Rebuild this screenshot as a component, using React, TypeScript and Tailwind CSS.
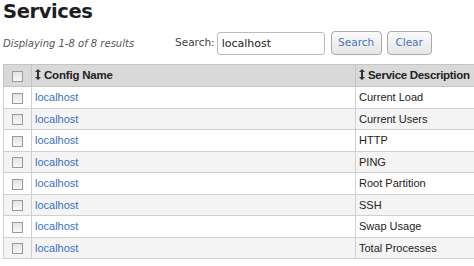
const rows = [
  "Current Load",
  "Current Users",
  "HTTP",
  "PING",
  "Root Partition",
  "SSH",
  "Swap Usage",
  "Total Processes",
]

function SortIcon() {
  return (
    <svg width="6" height="11" viewBox="0 0 6 11" className="mr-[3px] inline-block align-[-1px]">
      <path d="M3 0 L6 3 L4 3 L4 8 L6 8 L3 11 L0 8 L2 8 L2 3 L0 3 Z" fill="#333" />
    </svg>
  )
}

function Box() {
  return (
    <span className="inline-block h-[11px] w-[11px] border border-[#9a9a9a] bg-gradient-to-b from-[#e4e4e4] to-[#f8f8f8] align-middle" />
  )
}

export default function App() {
  return (
    <div className="h-[266px] w-[474px] overflow-hidden bg-white">
      <h1 className="pl-[3px] text-[19.5px] font-bold leading-[24px] tracking-[-0.4px] text-[#1e1e1e] [font-family:'DejaVu_Sans',sans-serif]">
        Services
      </h1>
      <div className="mt-[7px] flex items-center">
        <p className="ml-[3px] w-[172px] text-[10px] italic text-[#555] [font-family:'DejaVu_Sans',sans-serif]">
          Displaying 1-8 of 8 results
        </p>
        <span className="text-[10.5px] text-[#444] [font-family:'DejaVu_Sans',sans-serif]">Search:</span>
        <input
          readOnly
          value="localhost"
          className="ml-[2px] h-[23px] w-[108px] rounded-[3px] border border-[#bbb] px-[4px] text-[11px] text-[#222] [font-family:'DejaVu_Sans',sans-serif]"
        />
        <button className="ml-[6px] h-[24px] w-[51px] rounded-[4px] border border-[#aaa] bg-gradient-to-b from-[#fafafa] to-[#e6e6e6] text-[10.5px] text-[#4a72b8] [font-family:'DejaVu_Sans',sans-serif]">
          Search
        </button>
        <button className="ml-[5px] h-[24px] w-[45px] rounded-[4px] border border-[#aaa] bg-gradient-to-b from-[#fafafa] to-[#e6e6e6] text-[10.5px] text-[#4a72b8] [font-family:'DejaVu_Sans',sans-serif]">
          Clear
        </button>
      </div>
      <table className="ml-[3px] mt-[9px] w-[540px] border-collapse text-[11px] text-[#222] [font-family:'Liberation_Sans',Arial,sans-serif]">
        <thead>
          <tr className="h-[22px] bg-[#d9d9d9]">
            <th className="w-[28px] border border-[#c4c4c4] text-center">
              <Box />
            </th>
            <th className="w-[324px] border border-[#c4c4c4] pl-[3px] text-left text-[11.5px] font-bold tracking-[-0.2px]">
              <SortIcon />
              Config Name
            </th>
            <th className="border border-[#c4c4c4] pl-[3px] text-left text-[11.5px] font-bold tracking-[-0.3px]">
              <SortIcon />
              Service Description
            </th>
          </tr>
        </thead>
        <tbody>
          {rows.map((r, i) => (
            <tr key={r} className={i % 2 === 0 ? "h-[21.5px] bg-white" : "h-[21.5px] bg-[#f4f4f4]"}>
              <td className="border border-[#d0d0d0] text-center">
                <Box />
              </td>
              <td className="border border-[#d0d0d0] pl-[3px] text-[#3b6fc8]">localhost</td>
              <td className="border border-[#d0d0d0] pl-[3px]">{r}</td>
            </tr>
          ))}
        </tbody>
      </table>
    </div>
  )
}
